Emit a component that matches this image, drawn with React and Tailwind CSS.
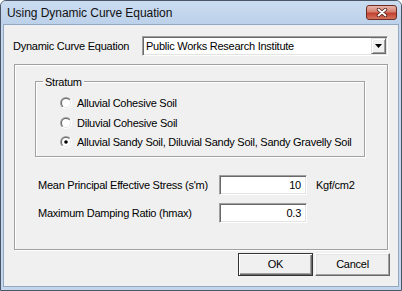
import React from "react";

const sunken =
  "border border-t-[#a0a0a0] border-l-[#a0a0a0] border-r-white border-b-white shadow-[inset_1px_1px_0_#696969,inset_-1px_-1px_0_#e3e3e3] bg-white";

function Radio({ checked, id }) {
  return (
    <svg width="12" height="12" viewBox="0 0 12 12" className="shrink-0">
      <defs>
        <linearGradient id={`ro${id}`} x1="0" y1="0" x2="1" y2="1">
          <stop offset="0.5" stopColor="#a0a0a0" />
          <stop offset="0.5" stopColor="#ffffff" />
        </linearGradient>
        <linearGradient id={`ri${id}`} x1="0" y1="0" x2="1" y2="1">
          <stop offset="0.5" stopColor="#696969" />
          <stop offset="0.5" stopColor="#e3e3e3" />
        </linearGradient>
      </defs>
      <circle cx="6" cy="6" r="6" fill={`url(#ro${id})`} />
      <circle cx="6" cy="6" r="5" fill={`url(#ri${id})`} />
      <circle cx="6" cy="6" r="4" fill="#ffffff" />
      {checked && <circle cx="6" cy="6" r="1.8" fill="#000000" />}
    </svg>
  );
}

function RadioRow({ label, checked, id, h }) {
  return (
    <div className={`flex items-center pl-[24px] gap-[5px] ${h}`}>
      <Radio checked={checked} id={id} />
      <span>{label}</span>
    </div>
  );
}

export default function App() {
  return (
    <div className="w-[402px] h-[291px] flex flex-col border border-[#4a5668] rounded-t-[6px] bg-[#c3d6ec] px-[2px] pb-[3px] font-['Liberation_Sans',Arial,sans-serif] text-[11px] tracking-[-0.25px] text-black overflow-hidden">
      {/* Title bar */}
      <div className="h-[23px] flex items-center justify-between bg-[linear-gradient(180deg,#cadcf0,#bcd1ea)] -mx-[2px] px-[6px]">
        <span className="text-[12px] tracking-[-0.05px] text-[#111]">Using Dynamic Curve Equation</span>
        <div className="w-[31px] h-[15px] rounded-[3px] border border-[#6b2c24] bg-[linear-gradient(180deg,#e9b5aa_0%,#d5806f_45%,#c2402f_55%,#d2735e_100%)] flex items-center justify-center mr-[-2px]">
          <svg width="12" height="9" viewBox="0 0 12 9">
            <path d="M2.5 1.5 L9.5 7.5 M9.5 1.5 L2.5 7.5" stroke="#4a1a14" strokeWidth="3.4" strokeLinecap="round" />
            <path d="M2.5 1.5 L9.5 7.5 M9.5 1.5 L2.5 7.5" stroke="#ffffff" strokeWidth="1.9" strokeLinecap="round" />
          </svg>
        </div>
      </div>

      {/* Client area */}
      <div className="flex-1 flex flex-col bg-[#f0f0f0] border border-[#93a9c3]">
        {/* Combo row */}
        <div className="flex items-center mt-[11px] h-[20px]">
          <span className="w-[138px] pl-[9px]">Dynamic Curve Equation</span>
          <div className={`w-[246px] h-[20px] flex items-stretch ${sunken}`}>
            <span className="flex-1 flex items-center pl-[3px]">Public Works Research Institute</span>
            <div className="w-[15px] m-[1px] flex items-center justify-center bg-[#f0f0f0] border border-t-[#e3e3e3] border-l-[#e3e3e3] border-r-[#696969] border-b-[#696969] shadow-[inset_1px_1px_0_#ffffff,inset_-1px_-1px_0_#a0a0a0]">
              <svg width="7" height="4" viewBox="0 0 7 4">
                <path d="M0 0 H7 L3.5 4 Z" fill="#000" />
              </svg>
            </div>
          </div>
        </div>

        {/* Outer group */}
        <div className="mt-[8px] ml-[10px] w-[374px] h-[186px] border border-[#a0a0a0] shadow-[inset_1px_1px_0_#ffffff,1px_1px_0_#ffffff] flex flex-col">
          <div className="relative mt-[16px] ml-[20px] w-[330px] h-[76px] border border-[#a0a0a0] shadow-[inset_1px_1px_0_#ffffff,1px_1px_0_#ffffff] flex flex-col pt-[11px]">
            <span className="absolute -top-[7px] left-[7px] px-[2px] bg-[#f0f0f0] leading-[14px]">Stratum</span>
            <RadioRow id="a" label="Alluvial Cohesive Soil" h="h-[20px]" />
            <RadioRow id="b" label="Diluvial Cohesive Soil" h="h-[20px]" />
            <RadioRow id="c" checked label="Alluvial Sandy Soil, Diluvial Sandy Soil, Sandy Gravelly Soil" h="h-[18px]" />
          </div>

          <div className="flex items-center mt-[18px] pl-[23px]">
            <span className="w-[181px]">Mean Principal Effective Stress (s'm)</span>
            <div className={`w-[88px] h-[20px] flex items-center justify-end pr-[5px] ${sunken}`}>10</div>
            <span className="ml-[9px]">Kgf/cm2</span>
          </div>
          <div className="flex items-center mt-[8px] pl-[23px]">
            <span className="w-[181px]">Maximum Damping Ratio (hmax)</span>
            <div className={`w-[88px] h-[20px] flex items-center justify-end pr-[5px] ${sunken}`}>0.3</div>
          </div>
        </div>

        {/* Buttons */}
        <div className="flex justify-end gap-[2px] mt-[3px] pr-[8px]">
          <div className="w-[75px] h-[23px] flex items-center justify-center bg-[#f0f0f0] border border-[#333333] shadow-[inset_1px_1px_0_#ffffff,inset_-1px_-1px_0_#696969,inset_-2px_-2px_0_#a0a0a0]">
            OK
          </div>
          <div className="w-[75px] h-[23px] flex items-center justify-center bg-[#f0f0f0] border border-t-white border-l-white border-r-[#696969] border-b-[#696969] shadow-[inset_-1px_-1px_0_#a0a0a0,inset_1px_1px_0_#e3e3e3]">
            Cancel
          </div>
        </div>
      </div>
    </div>
  );
}
